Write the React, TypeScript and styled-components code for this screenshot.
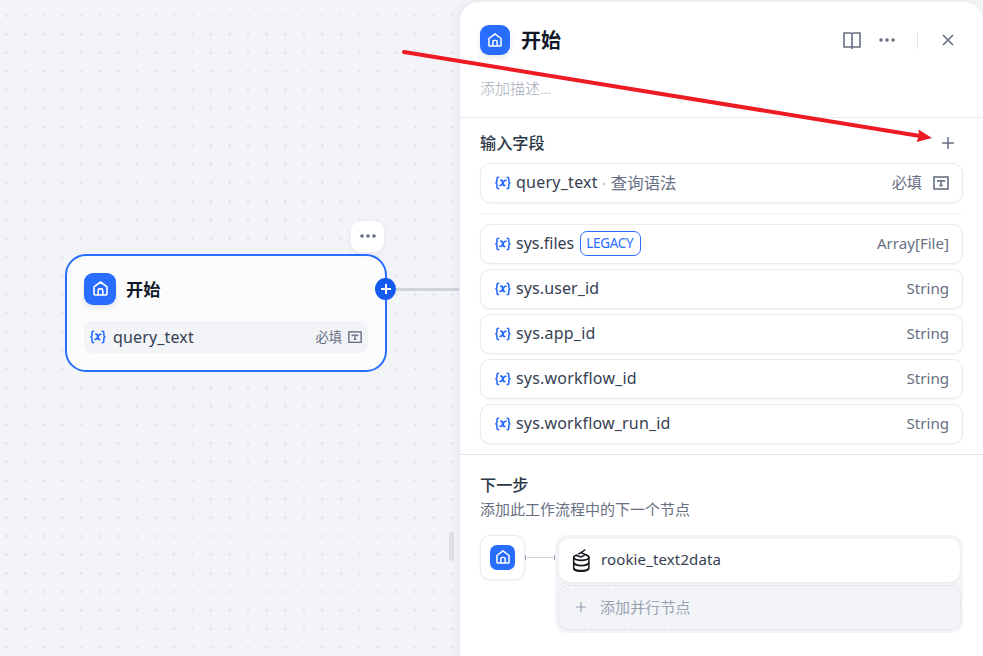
import React from 'react';
import styled, { createGlobalStyle } from 'styled-components';

const GlobalStyle = createGlobalStyle`
  * { box-sizing: border-box; }
  body {
    margin: 0;
    overflow: hidden;
    font-family: "Noto Sans", "Noto Sans CJK SC", sans-serif;
    color: #354052;
  }
  svg { display: block; flex: none; }
`;

const Page = styled.div`
  position: relative;
  display: flex;
  width: 983px;
  height: 656px;
  overflow: hidden;
  background: #f2f4f7;
`;

const Canvas = styled.div`
  position: relative;
  flex: 1;
  background-color: #f2f4f8;
`;

const Dots = styled.svg`
  position: absolute;
  inset: 0;
`;

const NodeCard = styled.div`
  position: absolute;
  left: 65px;
  top: 254px;
  width: 322px;
  height: 118px;
  padding: 17px 17px 0;
  border: 2px solid #296dff;
  border-radius: 21px;
  background: #fcfcfd;
`;

const NodeHeader = styled.div`
  display: flex;
  align-items: center;
  gap: 10px;
  height: 32px;
`;

const NodeTitle = styled.div`
  padding-top: 1px;
  font-size: 17.2px;
  font-weight: 700;
  line-height: 24px;
  color: #101828;
`;

const NodeVariable = styled.div`
  display: flex;
  align-items: center;
  gap: 2px;
  height: 32px;
  margin-top: 16px;
  padding: 0 6px 0 6px;
  border-radius: 8px;
  background: #f2f4f7;
`;

const NodeMore = styled.div`
  position: absolute;
  left: 351px;
  top: 221px;
  display: flex;
  align-items: center;
  justify-content: center;
  width: 33px;
  height: 31px;
  padding-bottom: 1px;
  border-radius: 9px;
  background: #fff;
  box-shadow: 0 2px 6px rgba(16, 24, 40, 0.06), 0 0 1px rgba(16, 24, 40, 0.08);
`;

const Edge = styled.div`
  position: absolute;
  left: 386px;
  right: 1px;
  top: 288px;
  height: 3px;
  background: #d0d5dc;
`;

const AddHandle = styled.div`
  position: absolute;
  left: 375px;
  top: 278px;
  display: flex;
  align-items: center;
  justify-content: center;
  width: 21px;
  height: 22px;
  border-radius: 50%;
  background: #155aef;
`;

const ResizeGrip = styled.div`
  position: absolute;
  left: 449px;
  top: 531px;
  width: 5px;
  height: 30px;
  border-radius: 3px;
  background: #dfe1e7;
`;

const Panel = styled.div`
  position: relative;
  width: 523px;
  height: 670px;
  margin-top: 1px;
  border-top: 1px solid #e9ebf0;
  border-radius: 19px 19px 0 0;
  background: #fff;
  box-shadow: -2px 0 10px rgba(16, 24, 40, 0.06);
`;

const PanelHeader = styled.div`
  height: 116px;
  padding: 23px 29px 0 20px;
  border-bottom: 1px solid #e9ebf0;
`;

const HeaderRow = styled.div`
  display: flex;
  align-items: center;
  height: 30px;
`;

const PanelTitle = styled.div`
  flex: 1;
  margin: 1px 0 0 11px;
  font-size: 20px;
  font-weight: 700;
  line-height: 28px;
  color: #101828;
`;

const HeaderGap = styled.div`
  width: 18px;
`;

const HeaderDivider = styled.div`
  width: 1px;
  height: 17px;
  margin: 0 24px 0 22px;
  background: #e3e6eb;
`;

const Description = styled.div`
  margin-top: 21px;
  font-size: 15px;
  font-weight: 300;
  line-height: 24px;
  color: #a4abb8;
`;

const FieldSection = styled.div`
  height: 337px;
  padding: 13px 20px 0;
  border-bottom: 1px solid #e0e2e7;
`;

const SectionTitle = styled.div`
  font-size: 16.2px;
  font-weight: 500;
  line-height: 24px;
  color: #2c3748;
`;

const SectionHead = styled.div`
  display: flex;
  align-items: center;
  justify-content: space-between;
  height: 24px;
  margin-bottom: 8px;
  padding-right: 9px;
`;

const FieldList = styled.div`
  display: flex;
  flex-direction: column;
  gap: 5px;
`;

const FieldRow = styled.div`
  display: flex;
  align-items: center;
  height: 40px;
  padding: 0 13px 1px 14px;
  border: 1px solid #e9ebf0;
  border-radius: 10px;
  background: #fff;
  box-shadow: 0 1px 2px rgba(16, 24, 40, 0.05);
`;

const FieldName = styled.div<{ $spacing?: number }>`
  margin: 0 0 1px 5px;
  font-size: 16px;
  line-height: 24px;
  letter-spacing: ${(p) => p.$spacing ?? 0}px;
  color: #354052;
`;

const FieldType = styled.div`
  margin: 0 0 1px auto;
  font-size: 15.1px;
  line-height: 22px;
  color: #676f83;
`;

const Dot = styled.span`
  width: 13px;
  text-align: center;
  font-size: 15px;
  color: #a9b0bc;
`;

const Label = styled.div`
  font-size: 16.4px;
  line-height: 24px;
  color: #676f83;
`;

const Required = styled.div<{ $size: number; $gap: number }>`
  margin: 0 ${(p) => p.$gap}px 1px auto;
  font-size: ${(p) => p.$size}px;
  line-height: 22px;
  color: #676f83;
`;

const LegacyBadge = styled.div`
  display: flex;
  align-items: center;
  justify-content: center;
  width: 61px;
  height: 25px;
  margin-left: 6px;
  padding: 0 2px 1px 0;
  border: 1px solid #296dff;
  border-radius: 7px;
  font-size: 13.5px;
  letter-spacing: -0.3px;
  color: #296dff;
`;

const Separator = styled.div`
  height: 1px;
  margin: 10px 0;
  background: #f2f4f7;
`;

const NextSection = styled.div`
  padding: 18px 20px 0;
`;

const NextHint = styled.div`
  font-size: 15px;
  line-height: 24px;
  color: #676f83;
`;

const NextFlow = styled.div`
  display: flex;
  margin-top: 14px;
`;

const StartBox = styled.div`
  display: flex;
  align-items: center;
  justify-content: center;
  width: 45px;
  height: 45px;
  border: 1px solid #e9ebf0;
  border-radius: 10px;
  background: #fff;
  box-shadow: 0 1px 3px rgba(16, 24, 40, 0.06);
`;

const Connector = styled.div`
  display: flex;
  align-items: center;
  width: 30px;
  height: 45px;
`;

const ConnectorCap = styled.div`
  width: 1px;
  height: 5px;
  background: #98a2b2;
`;

const ConnectorLine = styled.div`
  flex: 1;
  height: 1px;
  background: #d0d5dc;
`;

const Branches = styled.div`
  flex: 1;
  height: 98px;
  padding: 4px 2px 3px 3px;
  border-radius: 12px;
  background: #f2f4f7;
`;

const NextNode = styled.div`
  display: flex;
  align-items: center;
  height: 43px;
  margin: 0 1px;
  padding: 0 12px 0 13px;
  border-radius: 10px;
  background: #fff;
  box-shadow: 0 1px 2px rgba(16, 24, 40, 0.06), 0 0 1px rgba(16, 24, 40, 0.06);
`;

const NextName = styled.div`
  margin: 0 0 3px 10px;
  font-size: 15px;
  line-height: 22px;
  letter-spacing: 0.13px;
  color: #354052;
`;

const AddBranch = styled.div`
  display: flex;
  align-items: center;
  gap: 14px;
  height: 45px;
  margin-top: 3px;
  padding: 0 0 1px 17px;
  border: 1px dashed #dcdfe5;
  border-radius: 10px;
  font-size: 15.1px;
  color: #98a2b2;
`;

const AddBranchLabel = styled.span`
  margin-bottom: 2px;
`;

const IconTile = styled.div<{ $size: number; $radius: number; $shadow?: boolean }>`
  display: flex;
  align-items: center;
  justify-content: center;
  flex: none;
  width: ${(p) => p.$size}px;
  height: ${(p) => p.$size}px;
  padding-bottom: 1px;
  border-radius: ${(p) => p.$radius}px;
  background: #296dff;
  box-shadow: ${(p) => (p.$shadow ? '0 3px 6px rgba(16, 24, 40, 0.09)' : 'none')};
`;

const ArrowOverlay = styled.svg`
  position: absolute;
  left: 0;
  top: 0;
  pointer-events: none;
`;

const HomeIcon = ({ size = 15 }: { size?: number }) => (
  <svg width={size} height={size} viewBox="0 0 15 15" fill="none" stroke="#fff" strokeWidth="1.6" strokeLinejoin="round">
    <path d="M1 5.9 7.5 1 14 5.9v7.2q0 .9-.9.9H1.9q-.9 0-.9-.9z" />
    <path d="M5.2 14V9.4Q5.2 7.9 6.6 7.9h1.8q1.4 0 1.4 1.5V14" />
  </svg>
);

const VariableIcon = () => (
  <svg width="16" height="14" viewBox="0 0 16 14" fill="none" stroke="#296dff" strokeLinecap="round" strokeLinejoin="round">
    <g strokeWidth="1.6">
      <path d="M3.6 1.2h-.3Q2 1.2 2 2.5v2.3Q2 6.3.9 6.9 2 7.5 2 9v2.3q0 1.3 1.3 1.3h.3" />
      <path d="M12.2 1.2h.3q1.3 0 1.3 1.3v2.3q0 1.5 1.1 2.1-1.1.6-1.1 2.1v2.3q0 1.3-1.3 1.3h-.3" />
    </g>
    <path strokeWidth="1.9" d="M6 4.2q1.2-.2 1.5 1.1l.6 3q.3 1.4 1.6 1.1" />
    <path strokeWidth="1.6" d="M11 4.3q-1.1-.2-2 1L7 8.2q-.9 1.4-2 1.2" />
  </svg>
);

const TextInputIcon = ({ size = 16 }: { size?: number }) => (
  <svg width={size} height={(size * 14) / 16} viewBox="0 0 16 14" fill="none" stroke="#676f83" strokeWidth="1.6">
    <rect x="1" y="1" width="14" height="12" />
    <path d="M4.9 6.1V4.7h6.2v1.4M8 4.7v4.9M6.4 9.6h3.2" />
  </svg>
);

const PlusIcon = ({ size, color, width }: { size: number; color: string; width: number }) => (
  <svg width={size} height={size} viewBox={`0 0 ${size} ${size}`} stroke={color} strokeWidth={width}>
    <path d={`M${size / 2} 0V${size}M0 ${size / 2}H${size}`} />
  </svg>
);

const MoreIcon = () => (
  <svg width="16" height="4" viewBox="0 0 16 4" fill="#676f83">
    <circle cx="2" cy="2" r="1.8" />
    <circle cx="8" cy="2" r="1.8" />
    <circle cx="14" cy="2" r="1.8" />
  </svg>
);

const BookIcon = () => (
  <svg width="18" height="17" viewBox="0 0 18 17" fill="none" stroke="#676f83" strokeWidth="1.6">
    <path d="M9 17V2.6Q9 1 7.4 1H1v14h16V1h-6.4Q9 1 9 2.6" />
  </svg>
);

const CloseIcon = () => (
  <svg width="12" height="12" viewBox="0 0 12 12" stroke="#676f83" strokeWidth="1.6">
    <path d="M1 1l10 10M11 1L1 11" />
  </svg>
);

const DatabaseIcon = () => (
  <svg width="19" height="24" viewBox="0 0 19 24" fill="none" stroke="#15181d" strokeLinecap="round">
    <path d="M4.6 6C2.8 6.6 1.7 7.4 1.7 8.4c0 1.7 3.5 3 7.6 3s7.6-1.3 7.6-3c0-1-.9-1.8-2.3-2.3" strokeWidth="1.7" />
    <path d="M1.7 8.4v10.8c0 1.7 3.5 3 7.6 3s7.6-1.3 7.6-3V8.4" strokeWidth="1.5" />
    <path d="M2 14.3c.8 1.4 3.7 2.3 7.3 2.3s6.5-.9 7.3-2.3" strokeWidth="1.9" />
    <path d="M2.2 20c1.2 1.1 3.8 1.8 7.1 1.8s5.9-.7 7.1-1.8" strokeWidth="1.9" />
    <path d="M12.8 1 9 3.6 13.6 5.6 8.6 8.2M5 6.8l2.8.7M9 3.6 6.6 4.8" strokeWidth="1.5" />
  </svg>
);

const systemFields = [
  { name: 'sys.files', type: 'Array[File]', legacy: true, spacing: 0 },
  { name: 'sys.user_id', type: 'String', spacing: 0.1 },
  { name: 'sys.app_id', type: 'String', spacing: 0.2 },
  { name: 'sys.workflow_id', type: 'String', spacing: 0.2 },
  { name: 'sys.workflow_run_id', type: 'String', spacing: 0.17 },
];

export default function App() {
  return (
    <Page>
      <GlobalStyle />
      <Canvas>
        <Dots width="460" height="656">
          <defs>
            <pattern id="grid" x="-2.8" y="6.5" width="18.585" height="18.585" patternUnits="userSpaceOnUse">
              <circle cx="9.3" cy="9.3" r="1.4" fill="#e2e4e9" />
            </pattern>
          </defs>
          <rect width="460" height="656" fill="url(#grid)" />
        </Dots>
        <Edge />
        <NodeCard>
          <NodeHeader>
            <IconTile $size={32} $radius={9} $shadow>
              <HomeIcon />
            </IconTile>
            <NodeTitle>开始</NodeTitle>
          </NodeHeader>
          <NodeVariable>
            <VariableIcon />
            <FieldName $spacing={0.15}>query_text</FieldName>
            <Required $size={13.3} $gap={4}>必填</Required>
            <TextInputIcon size={14} />
          </NodeVariable>
        </NodeCard>
        <NodeMore>
          <MoreIcon />
        </NodeMore>
        <AddHandle>
          <PlusIcon size={10} color="#fff" width={2} />
        </AddHandle>
        <ResizeGrip />
      </Canvas>

      <Panel>
        <PanelHeader>
          <HeaderRow>
            <IconTile $size={30} $radius={9} $shadow>
              <HomeIcon size={14} />
            </IconTile>
            <PanelTitle>开始</PanelTitle>
            <BookIcon />
            <HeaderGap />
            <MoreIcon />
            <HeaderDivider />
            <CloseIcon />
          </HeaderRow>
          <Description>添加描述...</Description>
        </PanelHeader>

        <FieldSection>
          <SectionHead>
            <SectionTitle>输入字段</SectionTitle>
            <PlusIcon size={12} color="#676f83" width={1.5} />
          </SectionHead>
          <FieldRow>
            <VariableIcon />
            <FieldName $spacing={0.25}>query_text</FieldName>
            <Dot>·</Dot>
            <Label>查询语法</Label>
            <Required $size={15.2} $gap={11}>必填</Required>
            <TextInputIcon size={16} />
          </FieldRow>
          <Separator />
          <FieldList>
            {systemFields.map((field) => (
              <FieldRow key={field.name}>
                <VariableIcon />
                <FieldName $spacing={field.spacing}>{field.name}</FieldName>
                {field.legacy && <LegacyBadge>LEGACY</LegacyBadge>}
                <FieldType>{field.type}</FieldType>
              </FieldRow>
            ))}
          </FieldList>
        </FieldSection>

        <NextSection>
          <SectionTitle>下一步</SectionTitle>
          <NextHint>添加此工作流程中的下一个节点</NextHint>
          <NextFlow>
            <StartBox>
              <IconTile $size={25} $radius={7}>
                <HomeIcon size={14} />
              </IconTile>
            </StartBox>
            <Connector>
              <ConnectorCap />
              <ConnectorLine />
              <ConnectorCap />
            </Connector>
            <Branches>
              <NextNode>
                <DatabaseIcon />
                <NextName>rookie_text2data</NextName>
              </NextNode>
              <AddBranch>
                <PlusIcon size={10} color="#98a2b2" width={1.2} />
                <AddBranchLabel>添加并行节点</AddBranchLabel>
              </AddBranch>
            </Branches>
          </NextFlow>
        </NextSection>
      </Panel>

      <ArrowOverlay width="983" height="160" viewBox="0 0 983 160">
        <path d="M404 52 920 136" stroke="#ed1c24" strokeWidth="4" strokeLinecap="round" />
        <path d="M932 138 916.5 142 919 136 918.5 129.5z" fill="#ed1c24" />
      </ArrowOverlay>
    </Page>
  );
}
